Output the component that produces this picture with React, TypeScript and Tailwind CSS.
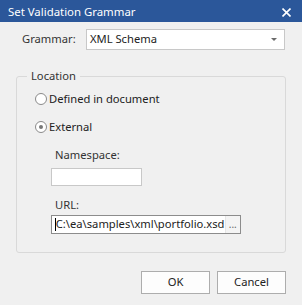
import { useState } from 'react';

const font = { fontFamily: '"Noto Sans", "Liberation Sans", sans-serif' };

const Radio = ({ checked, label, onClick }: { checked: boolean; label: string; onClick: () => void }) => (
  <label onClick={onClick} className="flex items-center h-[16px] cursor-pointer">
    <span className="w-[12px] h-[12px] rounded-full border border-[#8a8a8a] bg-white flex items-center justify-center">
      {checked && <span className="w-[4px] h-[4px] rounded-full bg-[#777]" />}
    </span>
    <span className="ml-[2px] text-[11.2px] text-[#222]">{label}</span>
  </label>
);

export default function App() {
  const [mode, setMode] = useState<'doc' | 'ext'>('ext');

  return (
    <div style={font} className="w-[302px] h-[305px] bg-[#f0f0f0] flex flex-col overflow-hidden">
      <div className="h-[22px] bg-[#2b579a] flex items-center justify-between pl-[8px] pr-[11px] pt-[2px] text-white">
        <span className="text-[11.4px]">Set Validation Grammar</span>
        <svg width="9" height="9" viewBox="0 0 9 9">
          <path d="M0.5 0.5 L8.5 8.5 M8.5 0.5 L0.5 8.5" stroke="white" strokeWidth="1.6" />
        </svg>
      </div>

      <div className="flex items-center mt-[7px] pl-[22px]">
        <span className="w-[64px] text-[11.2px] text-[#333]">Grammar:</span>
        <div className="w-[199px] h-[21px] bg-white border border-[#c8c8c8] flex items-center justify-between pl-[3px] pr-[7px]">
          <span className="text-[11.2px] text-[#222]">XML Schema</span>
          <svg width="6" height="3" viewBox="0 0 6 3">
            <path d="M0 0 L6 0 L3 3 Z" fill="#6a6a6a" />
          </svg>
        </div>
      </div>

      <fieldset className="mx-[16px] mt-[18px] w-[270px] h-[185px] border border-[#d9d9d9] rounded-[3px] pl-[18px]">
        <legend className="-ml-[8px] px-[4px] text-[11.2px] leading-[16px] text-[#333]">Location</legend>
        <div className="mt-[7px] flex flex-col gap-[12px]">
          <Radio checked={mode === 'doc'} label="Defined in document" onClick={() => setMode('doc')} />
          <Radio checked={mode === 'ext'} label="External" onClick={() => setMode('ext')} />
        </div>
        <div className="pl-[16px] flex flex-col">
          <span className="mt-[12px] ml-[4px] text-[11.2px] leading-[16px] text-[#333]">Namespace:</span>
          <input className="mt-[5px] w-[91px] h-[18px] bg-white border border-[#c8c8c8] outline-none" />
          <span className="mt-[11px] ml-[4px] text-[11.2px] leading-[16px] text-[#333]">URL:</span>
          <div className="mt-[2px] w-[190px] h-[19px] bg-white border border-[#8c8c8c] flex items-center">
            <span className="w-px h-[13px] bg-black ml-[3px]" />
            <span className="text-[11.2px] text-[#222] flex-1 whitespace-nowrap">C:\ea\samples\xml\portfolio.xsd</span>
            <span className="w-[20px] h-full border-l border-[#e6e6e6] bg-[#f4f4f4] flex items-center justify-center text-[10px] text-[#666] leading-none pb-[2px]">...</span>
          </div>
        </div>
      </fieldset>

      <div className="flex justify-end gap-[7px] pr-[16px] mt-[18px]">
        <button className="w-[69px] h-[23px] bg-[#fdfdfd] border border-[#adadad] text-[11.2px] text-[#222]">OK</button>
        <button className="w-[69px] h-[23px] bg-[#fdfdfd] border border-[#adadad] text-[11.2px] text-[#222]">Cancel</button>
      </div>
    </div>
  );
}
